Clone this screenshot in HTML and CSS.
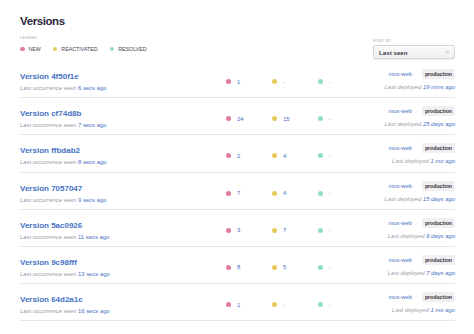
FILE: index.html
```html
<!DOCTYPE html>
<html lang="en">
<head>
    <meta charset="utf-8">
    <title>Versions</title>
    <link rel="stylesheet" href="styles.css">
</head>
<body>
    <div class="page">
        <h1>Versions</h1>

        <div class="toolbar">
            <div class="legend">
                <div class="label">Legend</div>
                <div class="legend-items">
                    <span class="legend-item"><i class="dot new"></i>New</span>
                    <span class="legend-item"><i class="dot reactivated"></i>Reactivated</span>
                    <span class="legend-item"><i class="dot resolved"></i>Resolved</span>
                </div>
            </div>
            <div class="sort">
                <div class="label">Sort by</div>
                <div class="select">
                    <span>Last seen</span>
                    <svg width="5" height="4" viewBox="0 0 5 4"><path d="M0.8 1.2 L2.5 2.8 L4.2 1.2" fill="none" stroke="#a0a0a8" stroke-width="0.8"/></svg>
                </div>
            </div>
        </div>

        <div class="versions">
            <div class="row">
                <div class="info">
                    <a class="version">Version 4f50f1e</a>
                    <div class="seen">Last occurrence seen <b>6 secs ago</b></div>
                </div>
                <div class="stat"><i class="dot new"></i><span class="num">1</span></div>
                <div class="stat"><i class="dot reactivated"></i><span class="none">-</span></div>
                <div class="stat"><i class="dot resolved"></i><span class="none">-</span></div>
                <div class="deploy">
                    <div class="env"><a>mox-web</a><span class="badge">production</span></div>
                    <div class="deployed">Last deployed <b>19 mins ago</b></div>
                </div>
            </div>
            <div class="row">
                <div class="info">
                    <a class="version">Version cf74d8b</a>
                    <div class="seen">Last occurrence seen <b>7 secs ago</b></div>
                </div>
                <div class="stat"><i class="dot new"></i><span class="num">24</span></div>
                <div class="stat"><i class="dot reactivated"></i><span class="num">15</span></div>
                <div class="stat"><i class="dot resolved"></i><span class="none">-</span></div>
                <div class="deploy">
                    <div class="env"><a>mox-web</a><span class="badge">production</span></div>
                    <div class="deployed">Last deployed <b>25 days ago</b></div>
                </div>
            </div>
            <div class="row">
                <div class="info">
                    <a class="version">Version ffbdab2</a>
                    <div class="seen">Last occurrence seen <b>8 secs ago</b></div>
                </div>
                <div class="stat"><i class="dot new"></i><span class="num">2</span></div>
                <div class="stat"><i class="dot reactivated"></i><span class="num">4</span></div>
                <div class="stat"><i class="dot resolved"></i><span class="none">-</span></div>
                <div class="deploy">
                    <div class="env"><a>mox-web</a><span class="badge">production</span></div>
                    <div class="deployed">Last deployed <b>1 mo ago</b></div>
                </div>
            </div>
            <div class="row">
                <div class="info">
                    <a class="version">Version 7057047</a>
                    <div class="seen">Last occurrence seen <b>9 secs ago</b></div>
                </div>
                <div class="stat"><i class="dot new"></i><span class="num">7</span></div>
                <div class="stat"><i class="dot reactivated"></i><span class="num">4</span></div>
                <div class="stat"><i class="dot resolved"></i><span class="none">-</span></div>
                <div class="deploy">
                    <div class="env"><a>mox-web</a><span class="badge">production</span></div>
                    <div class="deployed">Last deployed <b>15 days ago</b></div>
                </div>
            </div>
            <div class="row">
                <div class="info">
                    <a class="version">Version 5ac0926</a>
                    <div class="seen">Last occurrence seen <b>11 secs ago</b></div>
                </div>
                <div class="stat"><i class="dot new"></i><span class="num">3</span></div>
                <div class="stat"><i class="dot reactivated"></i><span class="num">7</span></div>
                <div class="stat"><i class="dot resolved"></i><span class="none">-</span></div>
                <div class="deploy">
                    <div class="env"><a>mox-web</a><span class="badge">production</span></div>
                    <div class="deployed">Last deployed <b>6 days ago</b></div>
                </div>
            </div>
            <div class="row">
                <div class="info">
                    <a class="version">Version 9c98fff</a>
                    <div class="seen">Last occurrence seen <b>13 secs ago</b></div>
                </div>
                <div class="stat"><i class="dot new"></i><span class="num">8</span></div>
                <div class="stat"><i class="dot reactivated"></i><span class="num">5</span></div>
                <div class="stat"><i class="dot resolved"></i><span class="none">-</span></div>
                <div class="deploy">
                    <div class="env"><a>mox-web</a><span class="badge">production</span></div>
                    <div class="deployed">Last deployed <b>7 days ago</b></div>
                </div>
            </div>
            <div class="row">
                <div class="info">
                    <a class="version">Version 64d2a1c</a>
                    <div class="seen">Last occurrence seen <b>16 secs ago</b></div>
                </div>
                <div class="stat"><i class="dot new"></i><span class="num">1</span></div>
                <div class="stat"><i class="dot reactivated"></i><span class="none">-</span></div>
                <div class="stat"><i class="dot resolved"></i><span class="none">-</span></div>
                <div class="deploy">
                    <div class="env"><a>mox-web</a><span class="badge">production</span></div>
                    <div class="deployed">Last deployed <b>1 mo ago</b></div>
                </div>
            </div>
        </div>
    </div>
</body>
</html>
```

FILE: styles.css
```css
body {
    margin: 0;
    background: #ffffff;
    font-family: "Liberation Sans", Arial, sans-serif;
    color: #2f2936;
}
.page {
    padding: 13px 19px 0 20px;
}
h1 {
    margin: 0;
    font-size: 11.5px;
    line-height: 16px;
    font-weight: bold;
    letter-spacing: -0.4px;
    color: #2b2740;
}
.toolbar {
    display: flex;
    justify-content: space-between;
    align-items: flex-start;
    margin-top: 6px;
}
.label {
    font-size: 3.8px;
    line-height: 6px;
    text-transform: uppercase;
    letter-spacing: 0.3px;
    color: #a8a6b3;
}
.legend-items {
    display: flex;
    margin-top: 4px;
    line-height: 8px;
}
.legend-item {
    display: flex;
    align-items: center;
    font-size: 5.3px;
    text-transform: uppercase;
    color: #4a4656;
    margin-right: 12px;
}
.legend-item .dot {
    width: 4.5px;
    height: 4.5px;
    margin-right: 4px;
}
.dot {
    display: inline-block;
    border-radius: 50%;
    flex: none;
}
.dot.new { background: #e07aa3; }
.dot.reactivated { background: #e8c95c; }
.dot.resolved { background: #8fdec8; }

.sort {
    margin-top: 3px;
    width: 82px;
}
.select {
    display: flex;
    justify-content: space-between;
    align-items: center;
    height: 14px;
    box-sizing: border-box;
    margin-top: 1px;
    padding: 0 4px 0 5px;
    border: 1px solid #d5d3dc;
    border-radius: 2px;
    background: linear-gradient(#fafafa, #f0f0f2);
    box-shadow: 0 1px 1px rgba(0, 0, 0, 0.06);
    font-size: 6.2px;
    font-weight: bold;
    color: #3a3645;
}

.versions {
    margin-top: 2px;
}
.row {
    display: flex;
    border-bottom: 1px solid #e8e7ec;
    height: 37.2px;
    box-sizing: border-box;
}
.info {
    width: 206px;
    padding-top: 10px;
}
.version {
    display: block;
    font-size: 8px;
    line-height: 11px;
    font-weight: bold;
    color: #4571c4;
}
.seen {
    margin-top: 2px;
    font-size: 5.9px;
    line-height: 8px;
    color: #9c99a8;
}
.seen b, .deployed b {
    color: #4571c4;
    font-weight: normal;
}
.stat {
    width: 46px;
    display: flex;
    align-items: center;
    align-self: flex-start;
    margin-top: 16.5px;
    height: 8px;
    font-size: 6px;
}
.stat .dot {
    width: 5px;
    height: 5px;
    margin-right: 6px;
}
.num { color: #4571c4; }
.none { color: #a5a2b0; }

.deploy {
    flex: 1;
    padding-top: 8px;
    text-align: right;
}
.env {
    display: flex;
    justify-content: flex-end;
    align-items: center;
    height: 10px;
}
.env a {
    font-size: 5.8px;
    color: #4571c4;
    margin-right: 10px;
}
.badge {
    font-size: 5.2px;
    line-height: 10px;
    font-weight: bold;
    color: #2f2c38;
    background: #efeff1;
    border-radius: 2px;
    padding: 0 3px;
}
.deployed {
    margin-top: 4px;
    font-size: 5.9px;
    line-height: 8px;
    font-style: italic;
    color: #a09dac;
}
```
